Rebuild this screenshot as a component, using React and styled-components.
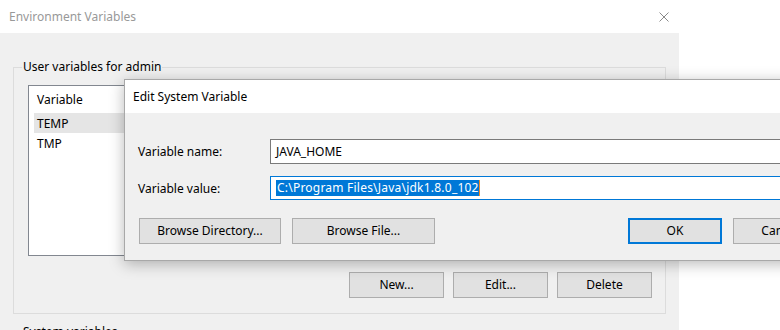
import React from "react";
import styled, { createGlobalStyle } from "styled-components";

const GlobalStyle = createGlobalStyle`
  html, body { margin: 0; padding: 0; background: #ffffff; overflow: hidden; }
  body {
    font-family: "Noto Sans", "Segoe UI", "DejaVu Sans", sans-serif;
    font-size: 12px;
    color: #000;
  }
  * { box-sizing: border-box; }
`;

const Screen = styled.div`
  position: relative;
  width: 780px;
  height: 330px;
  overflow: hidden;
  background: #ffffff;
`;

const Window = styled.div`
  width: 679px;
  height: 330px;
  display: flex;
  flex-direction: column;
`;

const TitleBar = styled.div`
  height: 33px;
  flex: none;
  background: #ffffff;
  display: flex;
  align-items: center;
  justify-content: space-between;
  padding: 0 10px 0 ${(p) => p.$padLeft || 9}px;
  color: ${(p) => (p.$inactive ? "#999999" : "#000000")};
  font-size: 12px;
  line-height: 16px;
`;

const CloseIcon = styled.svg`
  width: 10px;
  height: 10px;
  display: block;
`;

const WindowBody = styled.div`
  flex: 1;
  background: #f0f0f0;
  padding: 34px 13px 0 13px;
  display: flex;
  flex-direction: column;
  gap: 18px;
`;

const GroupBox = styled.div`
  position: relative;
  flex: none;
  border: 1px solid #dcdcdc;
  padding: 17px 13px 15px 14px;
  min-height: 40px;
`;

const GroupLabel = styled.span`
  position: absolute;
  top: -9px;
  left: 8px;
  padding: 0 1px;
  background: #f0f0f0;
  line-height: 16px;
`;

const ListBox = styled.div`
  height: 171px;
  border: 1px solid #828790;
  background: #ffffff;
  padding-left: 5px;
  display: flex;
  flex-direction: column;
`;

const ListHeader = styled.div`
  height: 27px;
  padding-left: 3px;
  display: flex;
  align-items: center;
`;

const ListRow = styled.div`
  height: 20px;
  padding-left: 3px;
  display: flex;
  align-items: center;
  background: ${(p) => (p.$selected ? "#e5e5e5" : "transparent")};
`;

const ButtonRow = styled.div`
  display: flex;
  justify-content: ${(p) => (p.$end ? "flex-end" : "flex-start")};
  gap: ${(p) => p.$gap || 9}px;
  margin-top: ${(p) => p.$top || 0}px;
  padding-left: ${(p) => p.$left || 0}px;
`;

const Button = styled.button`
  width: ${(p) => p.$w || 95}px;
  height: 26px;
  flex: none;
  margin-left: ${(p) => p.$ml || 0}px;
  background: #e1e1e1;
  border: ${(p) => (p.$default ? "2px solid #0078d7" : "1px solid #adadad")};
  font-family: inherit;
  font-size: 12px;
  color: #000;
  padding: 0;
  line-height: 16px;
`;

const Dialog = styled.div`
  position: absolute;
  left: 124px;
  top: 79px;
  width: 700px;
  height: 182px;
  border: 1px solid #a8a8a8;
  background: #f0f0f0;
  box-shadow: 0 3px 14px rgba(0, 0, 0, 0.28);
  display: flex;
  flex-direction: column;
`;

const DialogBody = styled.div`
  flex: 1;
  padding: 26px 0 0 13px;
  display: flex;
  flex-direction: column;
`;

const FieldRow = styled.div`
  display: grid;
  grid-template-columns: 132px 1fr;
  align-items: center;
  margin-top: ${(p) => p.$top || 0}px;
`;

const Field = styled.div`
  height: ${(p) => p.$h || 25}px;
  border: 1px solid ${(p) => (p.$focused ? "#0078d7" : "#7a7a7a")};
  background: #ffffff;
  padding-left: 5px;
  display: flex;
  align-items: center;
  white-space: nowrap;
`;

const Selection = styled.span`
  background: #0078d7;
  color: #ffffff;
  height: 16px;
  line-height: 16px;
  padding-left: 1px;
  letter-spacing: 0.22px;
  border-right: 1px solid #f08a24;
`;

export default function App() {
  return (
    <Screen>
      <GlobalStyle />
      <Window>
        <TitleBar $inactive>
          <span>Environment Variables</span>
          <CloseIcon viewBox="0 0 10 10">
            <path d="M0.5 0.5 L9.5 9.5 M9.5 0.5 L0.5 9.5" stroke="#8a8a8a" strokeWidth="1" fill="none" />
          </CloseIcon>
        </TitleBar>
        <WindowBody>
          <GroupBox>
            <GroupLabel>User variables for admin</GroupLabel>
            <ListBox>
              <ListHeader>Variable</ListHeader>
              <ListRow $selected>TEMP</ListRow>
              <ListRow>TMP</ListRow>
            </ListBox>
            <ButtonRow $end $top={16}>
              <Button>New...</Button>
              <Button>Edit...</Button>
              <Button>Delete</Button>
            </ButtonRow>
          </GroupBox>
          <GroupBox>
            <GroupLabel>System variables</GroupLabel>
          </GroupBox>
        </WindowBody>
      </Window>

      <Dialog>
        <TitleBar $padLeft={8}>
          <span>Edit System Variable</span>
        </TitleBar>
        <DialogBody>
          <FieldRow>
            <span>Variable name:</span>
            <Field>JAVA_HOME</Field>
          </FieldRow>
          <FieldRow $top={12}>
            <span>Variable value:</span>
            <Field $focused $h={24}>
              <Selection>C:\Program Files\Java\jdk1.8.0_102</Selection>
            </Field>
          </FieldRow>
          <ButtonRow $top={18} $left={1} $gap={11}>
            <Button $w={142}>Browse Directory...</Button>
            <Button $w={143}>Browse File...</Button>
            <Button $ml={182} $w={94} $default>OK</Button>
            <Button $w={94}>Cancel</Button>
          </ButtonRow>
        </DialogBody>
      </Dialog>
    </Screen>
  );
}
